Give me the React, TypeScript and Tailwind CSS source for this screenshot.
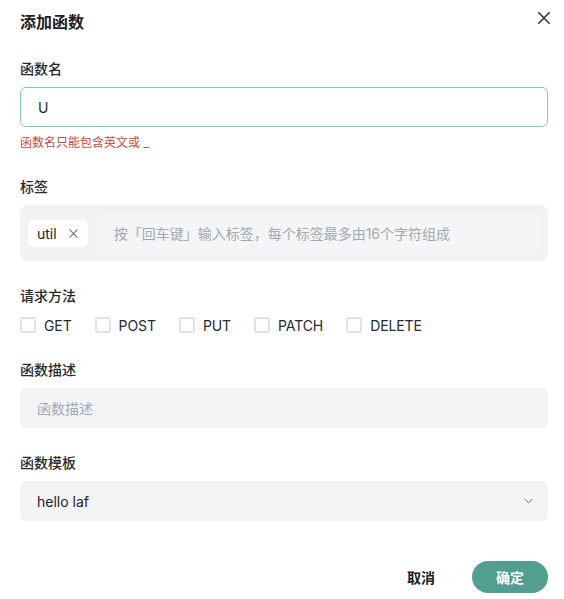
import React from "react";

const font = { fontFamily: '"Inter", "Noto Sans CJK SC", sans-serif' };

function Label({ children }: { children: React.ReactNode }) {
  return (
    <div className="text-[14px] leading-[20px] font-medium text-[#262a32] mb-2">
      {children}
    </div>
  );
}

function Check({ label }: { label: string }) {
  return (
    <label className="flex items-center gap-2">
      <span className="w-4 h-4 rounded-[2px] border-2 border-[#dfe3eb] bg-white" />
      <span className="text-[14px] tracking-[-0.1px] text-[#262a32]">{label}</span>
    </label>
  );
}

export default function App() {
  return (
    <div
      className="w-[564px] h-[599px] bg-white relative overflow-hidden"
      style={font}
    >
      <div className="pl-5 pr-4 pt-[10px] flex items-center justify-between">
        <div className="text-[16px] leading-[24px] font-semibold text-[#1d2027]">
          添加函数
        </div>
        <button className="absolute right-[14px] top-[12px] w-3 h-3 text-[#2b2f38]">
          <svg viewBox="0 0 12 12" width="12" height="12">
            <path
              d="M0.8 0.8 L11.2 11.2 M11.2 0.8 L0.8 11.2"
              stroke="currentColor"
              strokeWidth="1.5"
              strokeLinecap="round"
            />
          </svg>
        </button>
      </div>

      <div className="pl-5 pr-4 mt-[25px]">
        <Label>函数名</Label>
        <div className="h-10 rounded-md border border-[#80c6bc] flex items-center px-[17px] text-[14px] text-[#262a32]">
          U
        </div>
        <div className="mt-2 text-[12px] leading-[16px] text-[#c8473f]">
          函数名只能包含英文或 _
        </div>

        <div className="mt-[26px]">
          <Label>标签</Label>
          <div className="h-14 rounded-lg bg-[#f1f2f4] flex items-center pl-2 pr-[7px] gap-[7px]">
            <div className="h-[27px] rounded-md bg-white flex items-center pl-[9px] pr-[10px] gap-[12px]">
              <span className="text-[14px] text-[#1d2027]">util</span>
              <svg viewBox="0 0 10 10" width="9" height="9" className="text-[#6b717c]">
                <path
                  d="M1 1 L9 9 M9 1 L1 9"
                  stroke="currentColor"
                  strokeWidth="1.2"
                  strokeLinecap="round"
                />
              </svg>
            </div>
            <div className="flex-1 h-[39px] rounded-md bg-[#f4f5f7] flex items-center pl-[19px] text-[14px] text-[#a3a8b2]">
              按「回车键」输入标签，每个标签最多由16个字符组成
            </div>
          </div>
        </div>

        <div className="mt-[25px]">
          <Label>请求方法</Label>
          <div className="h-[22px] flex items-center gap-[23px]">
            <Check label="GET" />
            <Check label="POST" />
            <Check label="PUT" />
            <Check label="PATCH" />
            <Check label="DELETE" />
          </div>
        </div>

        <div className="mt-[24px]">
          <Label>函数描述</Label>
          <div className="h-10 rounded-md bg-[#f3f4f6] flex items-center px-[17px] text-[14px] text-[#a3a8b2]">
            函数描述
          </div>
        </div>

        <div className="mt-[25px]">
          <Label>函数模板</Label>
          <div className="h-10 rounded-md bg-[#f3f4f6] flex items-center justify-between pl-[17px] pr-[15px] text-[14px] text-[#1d2027]">
            <span>hello laf</span>
            <svg viewBox="0 0 10 6" width="9" height="6" className="text-[#6b717c]">
              <path
                d="M1 1 L5 5 L9 1"
                fill="none"
                stroke="currentColor"
                strokeWidth="1.1"
                strokeLinecap="round"
                strokeLinejoin="round"
              />
            </svg>
          </div>
        </div>

        <div className="mt-10 flex items-center justify-end gap-[37px]">
          <button className="text-[14px] font-semibold text-[#1d2027]">取消</button>
          <button className="h-8 w-[76px] rounded-full bg-[#529e90] text-white text-[14px] font-semibold">
            确定
          </button>
        </div>
      </div>
    </div>
  );
}
